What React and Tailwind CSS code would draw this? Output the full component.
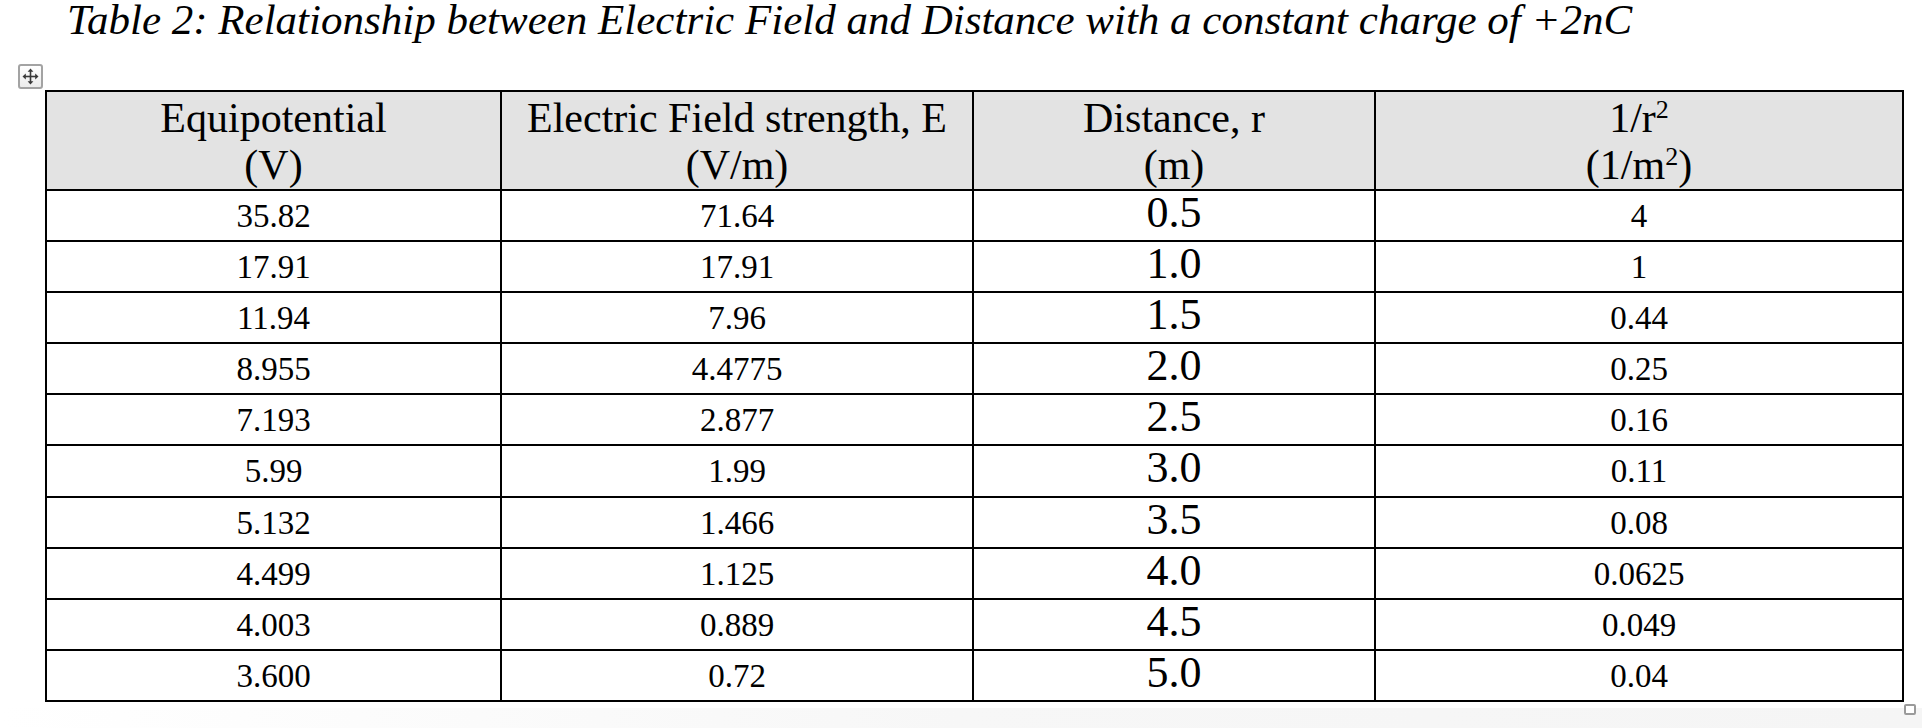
import React from "react";

const rows = [
  ["35.82", "71.64", "0.5", "4"],
  ["17.91", "17.91", "1.0", "1"],
  ["11.94", "7.96", "1.5", "0.44"],
  ["8.955", "4.4775", "2.0", "0.25"],
  ["7.193", "2.877", "2.5", "0.16"],
  ["5.99", "1.99", "3.0", "0.11"],
  ["5.132", "1.466", "3.5", "0.08"],
  ["4.499", "1.125", "4.0", "0.0625"],
  ["4.003", "0.889", "4.5", "0.049"],
  ["3.600", "0.72", "5.0", "0.04"],
];

const MoveHandle = () => (
  <div className="w-[25px] h-[25px] border-2 border-[#a3a3a3] rounded-[3px] bg-linear-to-b from-white to-[#ececec] flex items-center justify-center">
    <svg width="17" height="17" viewBox="0 0 17 17" fill="#3a3a3a" stroke="#3a3a3a">
      <line x1="8.5" y1="3" x2="8.5" y2="14" strokeWidth="1.6" />
      <line x1="3" y1="8.5" x2="14" y2="8.5" strokeWidth="1.6" />
      <polygon points="8.5,0.5 5.6,3.8 11.4,3.8" stroke="none" />
      <polygon points="8.5,16.5 5.6,13.2 11.4,13.2" stroke="none" />
      <polygon points="0.5,8.5 3.8,5.6 3.8,11.4" stroke="none" />
      <polygon points="16.5,8.5 13.2,5.6 13.2,11.4" stroke="none" />
    </svg>
  </div>
);

const App = () => {
  const head = "border-2 border-black bg-[#e3e3e3] align-top pt-[3px] px-0 pb-0 text-center font-normal text-[42px] leading-[47px]";
  const cell = "border-2 border-black align-baseline p-0 text-center text-[33px] leading-[44px]";

  return (
    <div
      className="relative w-[1922px] h-[728px] bg-white overflow-hidden text-black"
      style={{ fontFamily: '"Liberation Serif", "Times New Roman", serif' }}
    >
      <div className="pl-[67px] h-[41px] text-[43px] leading-[40px] italic whitespace-nowrap">
        Table 2: Relationship between Electric Field and Distance with a constant charge of +2nC
      </div>

      <div className="pl-[18px] pt-[23px]">
        <MoveHandle />
      </div>

      <div className="relative ml-[45px] mt-[1px] w-[1857px]">
        <table className="table-fixed border-collapse w-[1857px]">
          <colgroup>
            <col className="w-[455px]" />
            <col className="w-[472px]" />
            <col className="w-[402px]" />
            <col className="w-[528px]" />
          </colgroup>
          <thead>
            <tr className="h-[99px]">
              <th className={head}>
                Equipotential
                <br />
                (V)
              </th>
              <th className={head}>
                Electric Field strength, E
                <br />
                (V/m)
              </th>
              <th className={head}>
                Distance, r
                <br />
                (m)
              </th>
              <th className={head}>
                1/r<sup className="text-[26px] top-[-14px]">2</sup>
                <br />
                (1/m<sup className="text-[26px] top-[-14px]">2</sup>)
              </th>
            </tr>
          </thead>
          <tbody>
            {rows.map((r, i) => (
              <tr key={i} className="h-[51.1px]">
                <td className={cell}>{r[0]}</td>
                <td className={cell}>{r[1]}</td>
                <td className={cell + " text-[44px]"}>{r[2]}</td>
                <td className={cell}>{r[3]}</td>
              </tr>
            ))}
          </tbody>
        </table>
        <div className="absolute right-[-14px] bottom-[-13px] w-[12px] h-[11px] border-2 border-[#9a9a9a] rounded-[2px] bg-white" />
      </div>

      <div className="mt-[6px] h-[20px] bg-linear-to-r from-white via-[#f7f7f7] to-[#f5f5f5]" />
    </div>
  );
};

export default App;
